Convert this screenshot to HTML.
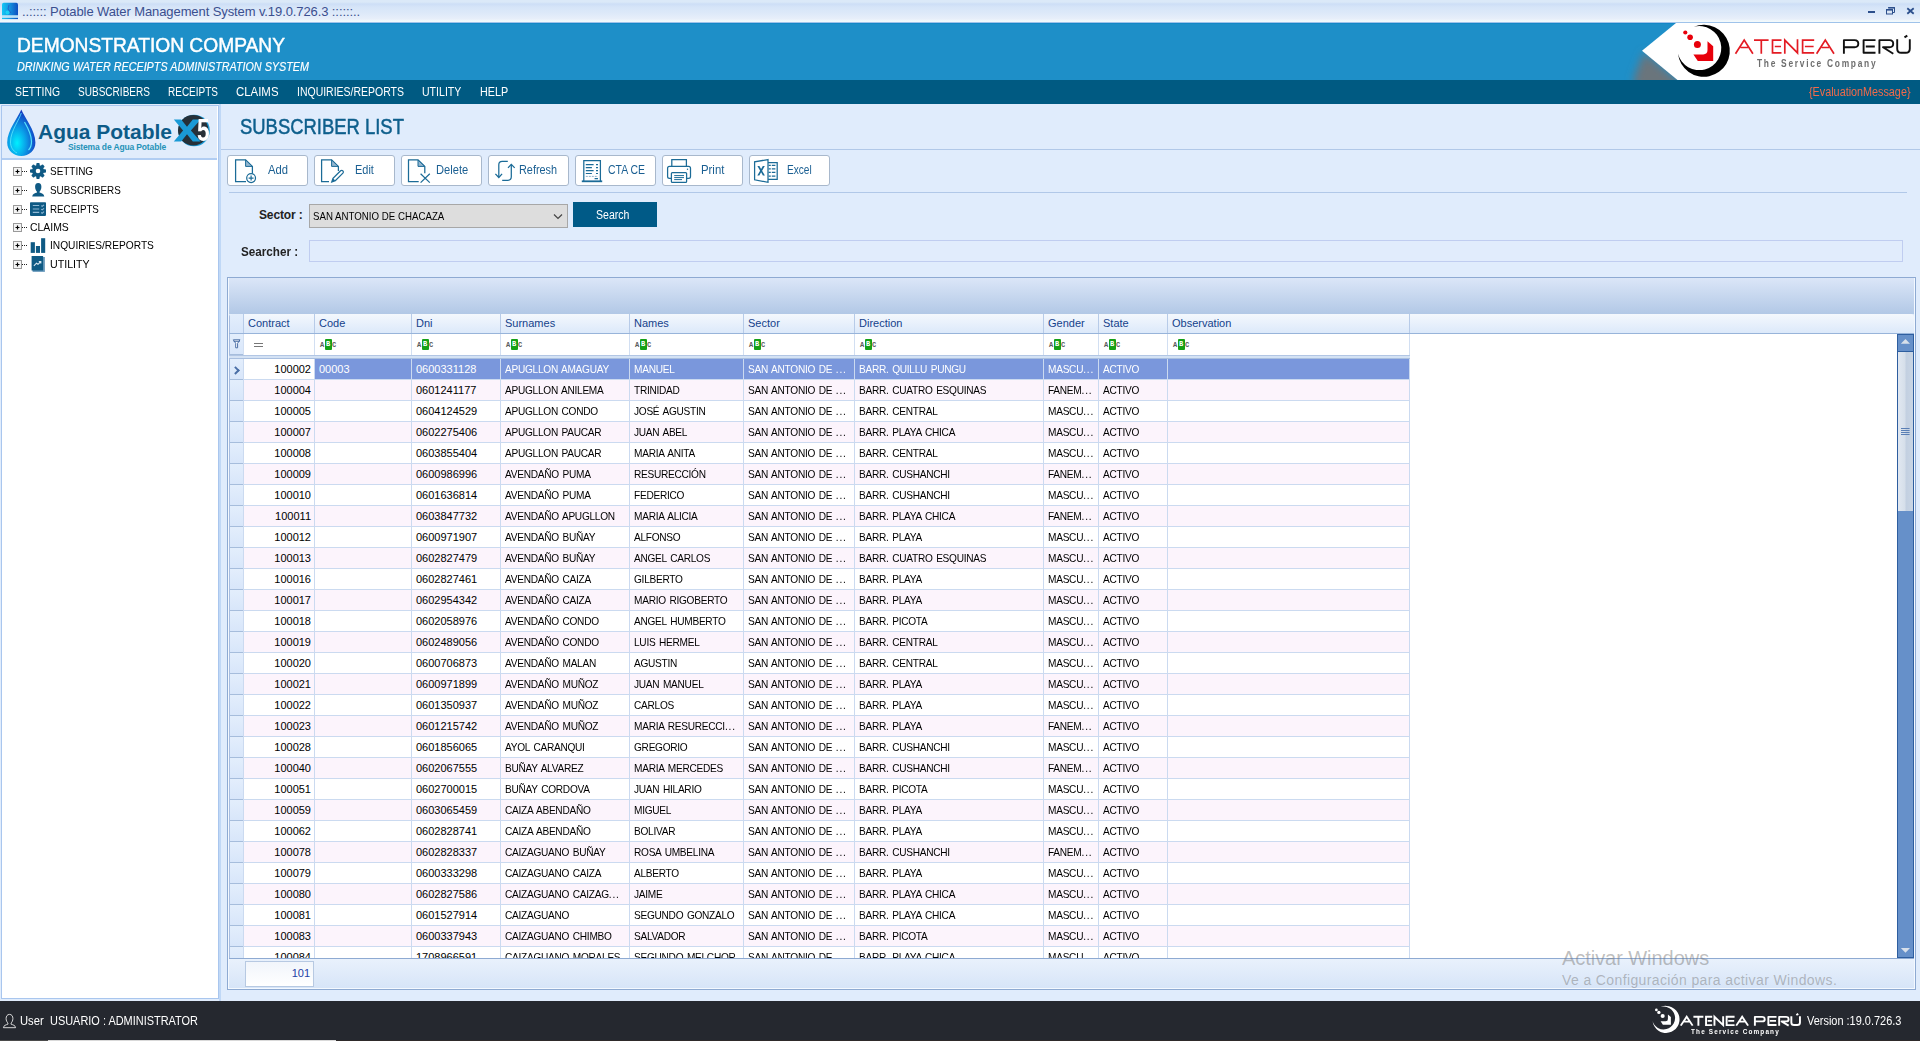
<!DOCTYPE html>
<html><head><meta charset="utf-8">
<style>
*{box-sizing:border-box;margin:0;padding:0}
html,body{width:1920px;height:1041px;overflow:hidden;background:#e0ecfc;font-family:"Liberation Sans",sans-serif}
.a{position:absolute}
#titlebar{left:0;top:0;width:1920px;height:23px;background:linear-gradient(#dbe9f8 0px,#dbe9f8 2px,#cddef6 4px,#d6e5f8 7px,#dde9f9 13px,#e8effa 19px,#f2f9fc 21px,#f2f9fc 22px);border-bottom:1px solid #9fc3ea}
#titletxt{left:22px;top:4px;font-size:13px;color:#3b4f8f;white-space:nowrap}
#header{left:0;top:23px;width:1920px;height:57px;background:#1e8fc8;border-top:1px solid #1487c6}
#company{left:17px;top:34px;font-size:19.5px;color:#fff;white-space:nowrap;-webkit-text-stroke:0.45px #fff}
#subtitle{left:17px;top:60px;font-size:12px;color:#fff;font-style:italic;white-space:nowrap;-webkit-text-stroke:0.15px #fff}
#menubar{left:0;top:80px;width:1920px;height:24px;background:#005a82}
.mi{top:85px;font-size:12px;color:#fff;white-space:nowrap}
#evalmsg{left:1809px;top:85px;font-size:12px;color:#f26a4a;white-space:nowrap}
.stt{top:1013px;font-size:13px;color:#fff;white-space:nowrap}
#status{left:0;top:1001px;width:1920px;height:40px;background:#25282f}
/* left panel */
#lp{left:1px;top:105px;width:218px;height:894px;border:1px solid #a9c6ee;background:#fff}
#logobox{left:2px;top:106px;width:215px;height:54px;background:#e1ecfb;border-bottom:2px solid #b1cdf2}
.ti{font-size:11px;color:#000;white-space:nowrap}
.exp{width:9px;height:9px;border:1px solid #8f8f8f;background:linear-gradient(#fff,#e4e4e4)}
.exp:before{content:"";position:absolute;left:1px;top:3px;width:5px;height:1px;background:#000}
.exp:after{content:"";position:absolute;left:3px;top:1px;width:1px;height:5px;background:#000}
.dots{width:5px;height:1px;border-top:1px dotted #808080}
/* right content */
#splitter{left:219px;top:104px;width:2px;height:897px;background:#c0d8f6}
#pagetitle{left:240px;top:114px;font-size:22px;color:#0e5f8c;white-space:nowrap;-webkit-text-stroke:0.5px #0e5f8c}
.hline{height:1px;background:#b1c8e8}
.btn{top:155px;width:81px;height:31px;border:1px solid #a8b8cc;border-radius:3px;background:#fff}
.btn span{position:absolute;top:7px;font-size:12px;color:#1a5f92;white-space:nowrap}
.btn svg{position:absolute;left:6px;top:2px}
#sectorlbl{left:259px;top:208px;font-size:12px;font-weight:bold;color:#222;white-space:nowrap}
#combo{left:309px;top:204px;width:259px;height:24px;background:#dddddd;border:1px solid #a7a7a7}
#combo span{position:absolute;left:3px;top:5px;font-size:11px;color:#000;white-space:nowrap}
#searchbtn{left:573px;top:202px;width:84px;height:25px;background:#005a87}
#searchbtn span{position:absolute;left:23px;top:6px;font-size:12px;color:#fff}
#searcherlbl{left:241px;top:245px;font-size:12px;font-weight:bold;color:#222;white-space:nowrap}
#searcher{left:309px;top:240px;width:1594px;height:22px;border:1px solid #c0cdf0;background:#e1ecfc}
/* grid */
#gridouter{left:227px;top:277px;width:1689px;height:713px;border:1px solid #8eaad2;background:#dbe7f8}
#grid{left:229px;top:278px;width:1685px;height:710px;overflow:hidden}
#grouppanel{left:0;top:0;width:1685px;height:36px;background:linear-gradient(#dbe6f8,#b2c8e6)}
#hdr{left:0;top:36px;width:1685px;height:20px;background:linear-gradient(#f4f8fd,#dce9fa);border-bottom:1px solid #98b4da;border-top-right-radius:3px;border-top-left-radius:3px;overflow:hidden}
.hc{position:absolute;top:0;height:19px;border-left:1px solid #b7cbe8;padding-left:4px;font-size:11px;line-height:18px;color:#15428b;white-space:nowrap}
#flt{left:0;top:56px;width:1669px;height:22px;background:#fff}
.fc{position:absolute;top:0;height:21px;border-left:1px solid #d2dff2;}
#fltline{left:0;top:77px;width:1181px;height:4px;background:#d4e2f4;border-top:1px solid #b2c6e4;border-bottom:1px solid #a9bfdf}
.row{position:absolute;left:0;width:1181px;height:21px;background:#fff;border-right:1px solid #cbdaf0}
.row.alt{background:#fcf4fc}
.c{position:absolute;top:0;height:21px;border-left:1px solid #cbdaf0;border-bottom:1px solid #cbdaf0;padding-left:4px;font-size:11px;line-height:20px;color:#000;white-space:nowrap;overflow:hidden}
.c.r{text-align:right;padding-right:3px;padding-left:0}
.c.t .sx{display:inline-block;transform:scaleX(0.92);transform-origin:0 0;letter-spacing:-0.3px;word-spacing:1.2px}
.el{letter-spacing:0.9px}
.arr{position:absolute;left:4px;top:7px;width:6px;height:6px;border-right:2px solid #4a6ea6;border-bottom:2px solid #4a6ea6;transform:rotate(-45deg) translate(-2px,0px)}
.funnel{position:absolute;left:4px;top:5px}
.row.sel .c{background:#7a97dc;color:#fff}
.row.sel .c.r{background:#fff;color:#000}
.ind{position:absolute;left:0;width:15px;height:21px;background:linear-gradient(#e3eefc,#d8e6fa);border-bottom:1px solid #a6bddc;border-right:1px solid #a8bfe0;border-left:1px solid #a8bde0}
.abc{position:absolute;left:5px;top:5px;width:16px;height:11px}
.abc i,.abc b{position:absolute;font-style:normal;font-weight:bold;font-size:7px;line-height:7px;font-family:"Liberation Mono",monospace}
.abc i{top:2.5px;color:#5a5a5a}
.abc i:first-child{left:0}
.abc i:last-child{left:12px}
.abc b{left:4.5px;top:0;width:7px;height:10.5px;background:#16a016;color:#fff;text-align:center;line-height:10.5px;border-radius:1px}
.eq{position:absolute;left:10px;top:9px;width:9px;height:4px;border-top:1px solid #777;border-bottom:1px solid #777}
#footer{left:0;top:680px;width:1685px;height:30px;background:linear-gradient(#e9f1fc,#d7e5f8);border-top:1px solid #8eaad2}
#footcell{left:16px;top:2px;width:69px;height:26px;border:1px solid #b7c9e2;background:linear-gradient(#f1f5fb,#fff);font-size:11px;color:#2442a6;text-align:right;padding-right:3px;line-height:22px}
#vscroll{left:1668px;top:56px;width:17px;height:624px;background:#6690c9;border:1px solid #2e5e9f}
#sbup{left:0;top:0;width:15px;height:17px;background:#6690c9;border-bottom:1px solid #2e5e9f}
#sbthumb{left:0;top:17px;width:15px;height:159px;background:linear-gradient(90deg,#e1e8f1,#d6dfea 45%,#c3d0e1 55%,#c9d5e4)}
#wm1{left:1562px;top:947px;font-size:20px;color:rgba(120,120,120,0.48);white-space:nowrap}
#wm2{left:1562px;top:972px;font-size:14px;color:rgba(120,120,120,0.48);white-space:nowrap}
#titletxt{letter-spacing:-0.098px}
#company{transform:scaleX(0.9842);transform-origin:0 0}
#subtitle{transform:scaleX(0.8987);transform-origin:0 0}
#mi0{transform:scaleX(0.8651);transform-origin:0 0}
#mi1{transform:scaleX(0.8369);transform-origin:0 0}
#mi2{transform:scaleX(0.8331);transform-origin:0 0}
#mi3{transform:scaleX(0.9510);transform-origin:0 0}
#mi4{transform:scaleX(0.8737);transform-origin:0 0}
#mi5{transform:scaleX(0.8797);transform-origin:0 0}
#mi6{transform:scaleX(0.8961);transform-origin:0 0}
#evalmsg{transform:scaleX(0.9002);transform-origin:0 0}
#pagetitle{transform:scaleX(0.8379);transform-origin:0 0}
#bt0{transform:scaleX(0.9364);transform-origin:0 0}
#bt1{transform:scaleX(0.9136);transform-origin:0 0}
#bt2{transform:scaleX(0.9283);transform-origin:0 0}
#bt3{transform:scaleX(0.9065);transform-origin:0 0}
#bt4{transform:scaleX(0.8715);transform-origin:0 0}
#bt5{transform:scaleX(0.9478);transform-origin:0 0}
#bt6{transform:scaleX(0.8417);transform-origin:0 0}
#sectorlbl{letter-spacing:-0.148px}
#combotxt{transform:scaleX(0.8816);transform-origin:0 0}
#searchtxt{transform:scaleX(0.8782);transform-origin:0 0}
#searcherlbl{transform:scaleX(0.9727);transform-origin:0 0}
#tr0{transform:scaleX(0.9041);transform-origin:0 0}
#tr1{transform:scaleX(0.8978);transform-origin:0 0}
#tr2{transform:scaleX(0.8888);transform-origin:0 0}
#tr3{transform:scaleX(0.9471);transform-origin:0 0}
#tr4{transform:scaleX(0.9255);transform-origin:0 0}
#tr5{transform:scaleX(0.9694);transform-origin:0 0}
#st1{transform:scaleX(0.8633);transform-origin:0 0}
#st2{transform:scaleX(0.8420);transform-origin:0 0}
#st3{transform:scaleX(0.9128);transform-origin:0 0}
#wm1{letter-spacing:-0.048px}
#agua{letter-spacing:-0.016px}
#sistema{letter-spacing:-0.141px}
#wm2{letter-spacing:0.382px}
</style></head><body>

<div id="titlebar" class="a"></div>
<div id="titletxt" class="a">..::::: Potable Water Management System v.19.0.726.3 ::::::..</div>


<div id="header" class="a"></div>
<div id="company" class="a">DEMONSTRATION COMPANY</div>
<div id="subtitle" class="a">DRINKING WATER RECEIPTS ADMINISTRATION SYSTEM</div>

<div id="menubar" class="a"></div>
<div id="mi0" class="a mi" style="left:15px">SETTING</div>
<div id="mi1" class="a mi" style="left:78px">SUBSCRIBERS</div>
<div id="mi2" class="a mi" style="left:168px">RECEIPTS</div>
<div id="mi3" class="a mi" style="left:236px">CLAIMS</div>
<div id="mi4" class="a mi" style="left:297px">INQUIRIES/REPORTS</div>
<div id="mi5" class="a mi" style="left:422px">UTILITY</div>
<div id="mi6" class="a mi" style="left:480px">HELP</div>
<div id="evalmsg" class="a">{EvaluationMessage}</div>

<!-- left panel -->
<div id="lp" class="a"></div>
<div id="logobox" class="a"></div>
<div id="tr0" class="a ti" style="left:50px;top:165px">SETTING</div>
<div id="tr1" class="a ti" style="left:50px;top:184px">SUBSCRIBERS</div>
<div id="tr2" class="a ti" style="left:50px;top:203px">RECEIPTS</div>
<div id="tr3" class="a ti" style="left:30px;top:221px">CLAIMS</div>
<div id="tr4" class="a ti" style="left:50px;top:239px">INQUIRIES/REPORTS</div>
<div id="tr5" class="a ti" style="left:50px;top:258px">UTILITY</div>

<!-- right content -->
<div id="splitter" class="a"></div>
<div id="pagetitle" class="a">SUBSCRIBER LIST</div>
<div class="a hline" style="left:221px;top:149px;width:1699px"></div>
<div class="a hline" style="left:229px;top:192px;width:1678px"></div>

<div class="a btn" style="left:227px"><span id="bt0" style="left:40px">Add</span></div>
<div class="a btn" style="left:314px"><span id="bt1" style="left:40px">Edit</span></div>
<div class="a btn" style="left:401px"><span id="bt2" style="left:34px">Delete</span></div>
<div class="a btn" style="left:488px"><span id="bt3" style="left:30px">Refresh</span></div>
<div class="a btn" style="left:575px"><span id="bt4" style="left:32px">CTA CE</span></div>
<div class="a btn" style="left:662px"><span id="bt5" style="left:38px">Print</span></div>
<div class="a btn" style="left:749px"><span id="bt6" style="left:37px">Excel</span></div>

<div id="sectorlbl" class="a">Sector :</div>
<div id="combo" class="a"><span id="combotxt">SAN ANTONIO DE CHACAZA</span><svg class="a" style="left:243px;top:8px" width="10" height="7"><path d="M1,1.5 L5,5.5 L9,1.5" stroke="#444" stroke-width="1.2" fill="none"/></svg></div>
<div id="searchbtn" class="a"><span id="searchtxt">Search</span></div>
<div id="searcherlbl" class="a">Searcher :</div>
<div id="searcher" class="a"></div>

<div id="gridouter" class="a"></div>
<div class="a" style="left:228px;top:278px;width:1687px;height:711px;border:1px solid #f4f9ff"></div>
<div id="grid" class="a">
 <div id="grouppanel" class="a"></div>
 <div id="hdr" class="a"><div class="ind" style="top:0;height:19px;border-bottom:none"></div><div class="hc" style="left:14px;width:71px">Contract</div><div class="hc" style="left:85px;width:97px">Code</div><div class="hc" style="left:182px;width:89px">Dni</div><div class="hc" style="left:271px;width:129px">Surnames</div><div class="hc" style="left:400px;width:114px">Names</div><div class="hc" style="left:514px;width:111px">Sector</div><div class="hc" style="left:625px;width:189px">Direction</div><div class="hc" style="left:814px;width:55px">Gender</div><div class="hc" style="left:869px;width:69px">State</div><div class="hc" style="left:938px;width:242px">Observation</div><div class="hc" style="left:1180px;width:504px"></div></div>
 <div class="a" style="left:0;top:77px;width:1669px;height:603px;background:#fff"></div>
 <div id="flt" class="a"><div class="ind" style="top:0"></div><div class="fc" style="left:14px;width:71px"><span class="eq"></span></div><div class="fc" style="left:85px;width:97px"><span class="abc"><i>A</i><b>B</b><i>C</i></span></div><div class="fc" style="left:182px;width:89px"><span class="abc"><i>A</i><b>B</b><i>C</i></span></div><div class="fc" style="left:271px;width:129px"><span class="abc"><i>A</i><b>B</b><i>C</i></span></div><div class="fc" style="left:400px;width:114px"><span class="abc"><i>A</i><b>B</b><i>C</i></span></div><div class="fc" style="left:514px;width:111px"><span class="abc"><i>A</i><b>B</b><i>C</i></span></div><div class="fc" style="left:625px;width:189px"><span class="abc"><i>A</i><b>B</b><i>C</i></span></div><div class="fc" style="left:814px;width:55px"><span class="abc"><i>A</i><b>B</b><i>C</i></span></div><div class="fc" style="left:869px;width:69px"><span class="abc"><i>A</i><b>B</b><i>C</i></span></div><div class="fc" style="left:938px;width:242px"><span class="abc"><i>A</i><b>B</b><i>C</i></span></div><div class="fc" style="left:1180px;width:1px"></div></div>
 <div id="fltline" class="a"></div>
<div class="row sel" style="top:81px"><div class="ind"><span class="arr"></span></div><div class="c r" style="left:14px;width:71px">100002</div><div class="c" style="left:85px;width:97px">00003</div><div class="c" style="left:182px;width:89px">0600331128</div><div class="c t" style="left:271px;width:129px"><span class="sx">APUGLLON AMAGUAY</span></div><div class="c t" style="left:400px;width:114px"><span class="sx">MANUEL</span></div><div class="c t" style="left:514px;width:111px"><span class="sx">SAN ANTONIO DE <span class="el">...</span></span></div><div class="c t" style="left:625px;width:189px"><span class="sx">BARR. QUILLU PUNGU</span></div><div class="c t" style="left:814px;width:55px"><span class="sx">MASCU<span class="el">...</span></span></div><div class="c t" style="left:869px;width:69px"><span class="sx">ACTIVO</span></div><div class="c t" style="left:938px;width:242px"></div></div>
<div class="row alt" style="top:102px"><div class="ind"></div><div class="c r" style="left:14px;width:71px">100004</div><div class="c" style="left:85px;width:97px"></div><div class="c" style="left:182px;width:89px">0601241177</div><div class="c t" style="left:271px;width:129px"><span class="sx">APUGLLON ANILEMA</span></div><div class="c t" style="left:400px;width:114px"><span class="sx">TRINIDAD</span></div><div class="c t" style="left:514px;width:111px"><span class="sx">SAN ANTONIO DE <span class="el">...</span></span></div><div class="c t" style="left:625px;width:189px"><span class="sx">BARR. CUATRO ESQUINAS</span></div><div class="c t" style="left:814px;width:55px"><span class="sx">FANEM<span class="el">...</span></span></div><div class="c t" style="left:869px;width:69px"><span class="sx">ACTIVO</span></div><div class="c t" style="left:938px;width:242px"></div></div>
<div class="row" style="top:123px"><div class="ind"></div><div class="c r" style="left:14px;width:71px">100005</div><div class="c" style="left:85px;width:97px"></div><div class="c" style="left:182px;width:89px">0604124529</div><div class="c t" style="left:271px;width:129px"><span class="sx">APUGLLON CONDO</span></div><div class="c t" style="left:400px;width:114px"><span class="sx">JOSÉ AGUSTIN</span></div><div class="c t" style="left:514px;width:111px"><span class="sx">SAN ANTONIO DE <span class="el">...</span></span></div><div class="c t" style="left:625px;width:189px"><span class="sx">BARR. CENTRAL</span></div><div class="c t" style="left:814px;width:55px"><span class="sx">MASCU<span class="el">...</span></span></div><div class="c t" style="left:869px;width:69px"><span class="sx">ACTIVO</span></div><div class="c t" style="left:938px;width:242px"></div></div>
<div class="row alt" style="top:144px"><div class="ind"></div><div class="c r" style="left:14px;width:71px">100007</div><div class="c" style="left:85px;width:97px"></div><div class="c" style="left:182px;width:89px">0602275406</div><div class="c t" style="left:271px;width:129px"><span class="sx">APUGLLON PAUCAR</span></div><div class="c t" style="left:400px;width:114px"><span class="sx">JUAN ABEL</span></div><div class="c t" style="left:514px;width:111px"><span class="sx">SAN ANTONIO DE <span class="el">...</span></span></div><div class="c t" style="left:625px;width:189px"><span class="sx">BARR. PLAYA CHICA</span></div><div class="c t" style="left:814px;width:55px"><span class="sx">MASCU<span class="el">...</span></span></div><div class="c t" style="left:869px;width:69px"><span class="sx">ACTIVO</span></div><div class="c t" style="left:938px;width:242px"></div></div>
<div class="row" style="top:165px"><div class="ind"></div><div class="c r" style="left:14px;width:71px">100008</div><div class="c" style="left:85px;width:97px"></div><div class="c" style="left:182px;width:89px">0603855404</div><div class="c t" style="left:271px;width:129px"><span class="sx">APUGLLON PAUCAR</span></div><div class="c t" style="left:400px;width:114px"><span class="sx">MARIA ANITA</span></div><div class="c t" style="left:514px;width:111px"><span class="sx">SAN ANTONIO DE <span class="el">...</span></span></div><div class="c t" style="left:625px;width:189px"><span class="sx">BARR. CENTRAL</span></div><div class="c t" style="left:814px;width:55px"><span class="sx">MASCU<span class="el">...</span></span></div><div class="c t" style="left:869px;width:69px"><span class="sx">ACTIVO</span></div><div class="c t" style="left:938px;width:242px"></div></div>
<div class="row alt" style="top:186px"><div class="ind"></div><div class="c r" style="left:14px;width:71px">100009</div><div class="c" style="left:85px;width:97px"></div><div class="c" style="left:182px;width:89px">0600986996</div><div class="c t" style="left:271px;width:129px"><span class="sx">AVENDAÑO PUMA</span></div><div class="c t" style="left:400px;width:114px"><span class="sx">RESURECCIÓN</span></div><div class="c t" style="left:514px;width:111px"><span class="sx">SAN ANTONIO DE <span class="el">...</span></span></div><div class="c t" style="left:625px;width:189px"><span class="sx">BARR. CUSHANCHI</span></div><div class="c t" style="left:814px;width:55px"><span class="sx">FANEM<span class="el">...</span></span></div><div class="c t" style="left:869px;width:69px"><span class="sx">ACTIVO</span></div><div class="c t" style="left:938px;width:242px"></div></div>
<div class="row" style="top:207px"><div class="ind"></div><div class="c r" style="left:14px;width:71px">100010</div><div class="c" style="left:85px;width:97px"></div><div class="c" style="left:182px;width:89px">0601636814</div><div class="c t" style="left:271px;width:129px"><span class="sx">AVENDAÑO PUMA</span></div><div class="c t" style="left:400px;width:114px"><span class="sx">FEDERICO</span></div><div class="c t" style="left:514px;width:111px"><span class="sx">SAN ANTONIO DE <span class="el">...</span></span></div><div class="c t" style="left:625px;width:189px"><span class="sx">BARR. CUSHANCHI</span></div><div class="c t" style="left:814px;width:55px"><span class="sx">MASCU<span class="el">...</span></span></div><div class="c t" style="left:869px;width:69px"><span class="sx">ACTIVO</span></div><div class="c t" style="left:938px;width:242px"></div></div>
<div class="row alt" style="top:228px"><div class="ind"></div><div class="c r" style="left:14px;width:71px">100011</div><div class="c" style="left:85px;width:97px"></div><div class="c" style="left:182px;width:89px">0603847732</div><div class="c t" style="left:271px;width:129px"><span class="sx">AVENDAÑO APUGLLON</span></div><div class="c t" style="left:400px;width:114px"><span class="sx">MARIA ALICIA</span></div><div class="c t" style="left:514px;width:111px"><span class="sx">SAN ANTONIO DE <span class="el">...</span></span></div><div class="c t" style="left:625px;width:189px"><span class="sx">BARR. PLAYA CHICA</span></div><div class="c t" style="left:814px;width:55px"><span class="sx">FANEM<span class="el">...</span></span></div><div class="c t" style="left:869px;width:69px"><span class="sx">ACTIVO</span></div><div class="c t" style="left:938px;width:242px"></div></div>
<div class="row" style="top:249px"><div class="ind"></div><div class="c r" style="left:14px;width:71px">100012</div><div class="c" style="left:85px;width:97px"></div><div class="c" style="left:182px;width:89px">0600971907</div><div class="c t" style="left:271px;width:129px"><span class="sx">AVENDAÑO BUÑAY</span></div><div class="c t" style="left:400px;width:114px"><span class="sx">ALFONSO</span></div><div class="c t" style="left:514px;width:111px"><span class="sx">SAN ANTONIO DE <span class="el">...</span></span></div><div class="c t" style="left:625px;width:189px"><span class="sx">BARR. PLAYA</span></div><div class="c t" style="left:814px;width:55px"><span class="sx">MASCU<span class="el">...</span></span></div><div class="c t" style="left:869px;width:69px"><span class="sx">ACTIVO</span></div><div class="c t" style="left:938px;width:242px"></div></div>
<div class="row alt" style="top:270px"><div class="ind"></div><div class="c r" style="left:14px;width:71px">100013</div><div class="c" style="left:85px;width:97px"></div><div class="c" style="left:182px;width:89px">0602827479</div><div class="c t" style="left:271px;width:129px"><span class="sx">AVENDAÑO BUÑAY</span></div><div class="c t" style="left:400px;width:114px"><span class="sx">ANGEL CARLOS</span></div><div class="c t" style="left:514px;width:111px"><span class="sx">SAN ANTONIO DE <span class="el">...</span></span></div><div class="c t" style="left:625px;width:189px"><span class="sx">BARR. CUATRO ESQUINAS</span></div><div class="c t" style="left:814px;width:55px"><span class="sx">MASCU<span class="el">...</span></span></div><div class="c t" style="left:869px;width:69px"><span class="sx">ACTIVO</span></div><div class="c t" style="left:938px;width:242px"></div></div>
<div class="row" style="top:291px"><div class="ind"></div><div class="c r" style="left:14px;width:71px">100016</div><div class="c" style="left:85px;width:97px"></div><div class="c" style="left:182px;width:89px">0602827461</div><div class="c t" style="left:271px;width:129px"><span class="sx">AVENDAÑO CAIZA</span></div><div class="c t" style="left:400px;width:114px"><span class="sx">GILBERTO</span></div><div class="c t" style="left:514px;width:111px"><span class="sx">SAN ANTONIO DE <span class="el">...</span></span></div><div class="c t" style="left:625px;width:189px"><span class="sx">BARR. PLAYA</span></div><div class="c t" style="left:814px;width:55px"><span class="sx">MASCU<span class="el">...</span></span></div><div class="c t" style="left:869px;width:69px"><span class="sx">ACTIVO</span></div><div class="c t" style="left:938px;width:242px"></div></div>
<div class="row alt" style="top:312px"><div class="ind"></div><div class="c r" style="left:14px;width:71px">100017</div><div class="c" style="left:85px;width:97px"></div><div class="c" style="left:182px;width:89px">0602954342</div><div class="c t" style="left:271px;width:129px"><span class="sx">AVENDAÑO CAIZA</span></div><div class="c t" style="left:400px;width:114px"><span class="sx">MARIO RIGOBERTO</span></div><div class="c t" style="left:514px;width:111px"><span class="sx">SAN ANTONIO DE <span class="el">...</span></span></div><div class="c t" style="left:625px;width:189px"><span class="sx">BARR. PLAYA</span></div><div class="c t" style="left:814px;width:55px"><span class="sx">MASCU<span class="el">...</span></span></div><div class="c t" style="left:869px;width:69px"><span class="sx">ACTIVO</span></div><div class="c t" style="left:938px;width:242px"></div></div>
<div class="row" style="top:333px"><div class="ind"></div><div class="c r" style="left:14px;width:71px">100018</div><div class="c" style="left:85px;width:97px"></div><div class="c" style="left:182px;width:89px">0602058976</div><div class="c t" style="left:271px;width:129px"><span class="sx">AVENDAÑO CONDO</span></div><div class="c t" style="left:400px;width:114px"><span class="sx">ANGEL HUMBERTO</span></div><div class="c t" style="left:514px;width:111px"><span class="sx">SAN ANTONIO DE <span class="el">...</span></span></div><div class="c t" style="left:625px;width:189px"><span class="sx">BARR. PICOTA</span></div><div class="c t" style="left:814px;width:55px"><span class="sx">MASCU<span class="el">...</span></span></div><div class="c t" style="left:869px;width:69px"><span class="sx">ACTIVO</span></div><div class="c t" style="left:938px;width:242px"></div></div>
<div class="row alt" style="top:354px"><div class="ind"></div><div class="c r" style="left:14px;width:71px">100019</div><div class="c" style="left:85px;width:97px"></div><div class="c" style="left:182px;width:89px">0602489056</div><div class="c t" style="left:271px;width:129px"><span class="sx">AVENDAÑO CONDO</span></div><div class="c t" style="left:400px;width:114px"><span class="sx">LUIS HERMEL</span></div><div class="c t" style="left:514px;width:111px"><span class="sx">SAN ANTONIO DE <span class="el">...</span></span></div><div class="c t" style="left:625px;width:189px"><span class="sx">BARR. CENTRAL</span></div><div class="c t" style="left:814px;width:55px"><span class="sx">MASCU<span class="el">...</span></span></div><div class="c t" style="left:869px;width:69px"><span class="sx">ACTIVO</span></div><div class="c t" style="left:938px;width:242px"></div></div>
<div class="row" style="top:375px"><div class="ind"></div><div class="c r" style="left:14px;width:71px">100020</div><div class="c" style="left:85px;width:97px"></div><div class="c" style="left:182px;width:89px">0600706873</div><div class="c t" style="left:271px;width:129px"><span class="sx">AVENDAÑO MALAN</span></div><div class="c t" style="left:400px;width:114px"><span class="sx">AGUSTIN</span></div><div class="c t" style="left:514px;width:111px"><span class="sx">SAN ANTONIO DE <span class="el">...</span></span></div><div class="c t" style="left:625px;width:189px"><span class="sx">BARR. CENTRAL</span></div><div class="c t" style="left:814px;width:55px"><span class="sx">MASCU<span class="el">...</span></span></div><div class="c t" style="left:869px;width:69px"><span class="sx">ACTIVO</span></div><div class="c t" style="left:938px;width:242px"></div></div>
<div class="row alt" style="top:396px"><div class="ind"></div><div class="c r" style="left:14px;width:71px">100021</div><div class="c" style="left:85px;width:97px"></div><div class="c" style="left:182px;width:89px">0600971899</div><div class="c t" style="left:271px;width:129px"><span class="sx">AVENDAÑO MUÑOZ</span></div><div class="c t" style="left:400px;width:114px"><span class="sx">JUAN MANUEL</span></div><div class="c t" style="left:514px;width:111px"><span class="sx">SAN ANTONIO DE <span class="el">...</span></span></div><div class="c t" style="left:625px;width:189px"><span class="sx">BARR. PLAYA</span></div><div class="c t" style="left:814px;width:55px"><span class="sx">MASCU<span class="el">...</span></span></div><div class="c t" style="left:869px;width:69px"><span class="sx">ACTIVO</span></div><div class="c t" style="left:938px;width:242px"></div></div>
<div class="row" style="top:417px"><div class="ind"></div><div class="c r" style="left:14px;width:71px">100022</div><div class="c" style="left:85px;width:97px"></div><div class="c" style="left:182px;width:89px">0601350937</div><div class="c t" style="left:271px;width:129px"><span class="sx">AVENDAÑO MUÑOZ</span></div><div class="c t" style="left:400px;width:114px"><span class="sx">CARLOS</span></div><div class="c t" style="left:514px;width:111px"><span class="sx">SAN ANTONIO DE <span class="el">...</span></span></div><div class="c t" style="left:625px;width:189px"><span class="sx">BARR. PLAYA</span></div><div class="c t" style="left:814px;width:55px"><span class="sx">MASCU<span class="el">...</span></span></div><div class="c t" style="left:869px;width:69px"><span class="sx">ACTIVO</span></div><div class="c t" style="left:938px;width:242px"></div></div>
<div class="row alt" style="top:438px"><div class="ind"></div><div class="c r" style="left:14px;width:71px">100023</div><div class="c" style="left:85px;width:97px"></div><div class="c" style="left:182px;width:89px">0601215742</div><div class="c t" style="left:271px;width:129px"><span class="sx">AVENDAÑO MUÑOZ</span></div><div class="c t" style="left:400px;width:114px"><span class="sx">MARIA RESURECCI<span class="el">...</span></span></div><div class="c t" style="left:514px;width:111px"><span class="sx">SAN ANTONIO DE <span class="el">...</span></span></div><div class="c t" style="left:625px;width:189px"><span class="sx">BARR. PLAYA</span></div><div class="c t" style="left:814px;width:55px"><span class="sx">FANEM<span class="el">...</span></span></div><div class="c t" style="left:869px;width:69px"><span class="sx">ACTIVO</span></div><div class="c t" style="left:938px;width:242px"></div></div>
<div class="row" style="top:459px"><div class="ind"></div><div class="c r" style="left:14px;width:71px">100028</div><div class="c" style="left:85px;width:97px"></div><div class="c" style="left:182px;width:89px">0601856065</div><div class="c t" style="left:271px;width:129px"><span class="sx">AYOL CARANQUI</span></div><div class="c t" style="left:400px;width:114px"><span class="sx">GREGORIO</span></div><div class="c t" style="left:514px;width:111px"><span class="sx">SAN ANTONIO DE <span class="el">...</span></span></div><div class="c t" style="left:625px;width:189px"><span class="sx">BARR. CUSHANCHI</span></div><div class="c t" style="left:814px;width:55px"><span class="sx">MASCU<span class="el">...</span></span></div><div class="c t" style="left:869px;width:69px"><span class="sx">ACTIVO</span></div><div class="c t" style="left:938px;width:242px"></div></div>
<div class="row alt" style="top:480px"><div class="ind"></div><div class="c r" style="left:14px;width:71px">100040</div><div class="c" style="left:85px;width:97px"></div><div class="c" style="left:182px;width:89px">0602067555</div><div class="c t" style="left:271px;width:129px"><span class="sx">BUÑAY ALVAREZ</span></div><div class="c t" style="left:400px;width:114px"><span class="sx">MARIA MERCEDES</span></div><div class="c t" style="left:514px;width:111px"><span class="sx">SAN ANTONIO DE <span class="el">...</span></span></div><div class="c t" style="left:625px;width:189px"><span class="sx">BARR. CUSHANCHI</span></div><div class="c t" style="left:814px;width:55px"><span class="sx">FANEM<span class="el">...</span></span></div><div class="c t" style="left:869px;width:69px"><span class="sx">ACTIVO</span></div><div class="c t" style="left:938px;width:242px"></div></div>
<div class="row" style="top:501px"><div class="ind"></div><div class="c r" style="left:14px;width:71px">100051</div><div class="c" style="left:85px;width:97px"></div><div class="c" style="left:182px;width:89px">0602700015</div><div class="c t" style="left:271px;width:129px"><span class="sx">BUÑAY CORDOVA</span></div><div class="c t" style="left:400px;width:114px"><span class="sx">JUAN HILARIO</span></div><div class="c t" style="left:514px;width:111px"><span class="sx">SAN ANTONIO DE <span class="el">...</span></span></div><div class="c t" style="left:625px;width:189px"><span class="sx">BARR. PICOTA</span></div><div class="c t" style="left:814px;width:55px"><span class="sx">MASCU<span class="el">...</span></span></div><div class="c t" style="left:869px;width:69px"><span class="sx">ACTIVO</span></div><div class="c t" style="left:938px;width:242px"></div></div>
<div class="row alt" style="top:522px"><div class="ind"></div><div class="c r" style="left:14px;width:71px">100059</div><div class="c" style="left:85px;width:97px"></div><div class="c" style="left:182px;width:89px">0603065459</div><div class="c t" style="left:271px;width:129px"><span class="sx">CAIZA ABENDAÑO</span></div><div class="c t" style="left:400px;width:114px"><span class="sx">MIGUEL</span></div><div class="c t" style="left:514px;width:111px"><span class="sx">SAN ANTONIO DE <span class="el">...</span></span></div><div class="c t" style="left:625px;width:189px"><span class="sx">BARR. PLAYA</span></div><div class="c t" style="left:814px;width:55px"><span class="sx">MASCU<span class="el">...</span></span></div><div class="c t" style="left:869px;width:69px"><span class="sx">ACTIVO</span></div><div class="c t" style="left:938px;width:242px"></div></div>
<div class="row" style="top:543px"><div class="ind"></div><div class="c r" style="left:14px;width:71px">100062</div><div class="c" style="left:85px;width:97px"></div><div class="c" style="left:182px;width:89px">0602828741</div><div class="c t" style="left:271px;width:129px"><span class="sx">CAIZA ABENDAÑO</span></div><div class="c t" style="left:400px;width:114px"><span class="sx">BOLIVAR</span></div><div class="c t" style="left:514px;width:111px"><span class="sx">SAN ANTONIO DE <span class="el">...</span></span></div><div class="c t" style="left:625px;width:189px"><span class="sx">BARR. PLAYA</span></div><div class="c t" style="left:814px;width:55px"><span class="sx">MASCU<span class="el">...</span></span></div><div class="c t" style="left:869px;width:69px"><span class="sx">ACTIVO</span></div><div class="c t" style="left:938px;width:242px"></div></div>
<div class="row alt" style="top:564px"><div class="ind"></div><div class="c r" style="left:14px;width:71px">100078</div><div class="c" style="left:85px;width:97px"></div><div class="c" style="left:182px;width:89px">0602828337</div><div class="c t" style="left:271px;width:129px"><span class="sx">CAIZAGUANO BUÑAY</span></div><div class="c t" style="left:400px;width:114px"><span class="sx">ROSA UMBELINA</span></div><div class="c t" style="left:514px;width:111px"><span class="sx">SAN ANTONIO DE <span class="el">...</span></span></div><div class="c t" style="left:625px;width:189px"><span class="sx">BARR. CUSHANCHI</span></div><div class="c t" style="left:814px;width:55px"><span class="sx">FANEM<span class="el">...</span></span></div><div class="c t" style="left:869px;width:69px"><span class="sx">ACTIVO</span></div><div class="c t" style="left:938px;width:242px"></div></div>
<div class="row" style="top:585px"><div class="ind"></div><div class="c r" style="left:14px;width:71px">100079</div><div class="c" style="left:85px;width:97px"></div><div class="c" style="left:182px;width:89px">0600333298</div><div class="c t" style="left:271px;width:129px"><span class="sx">CAIZAGUANO CAIZA</span></div><div class="c t" style="left:400px;width:114px"><span class="sx">ALBERTO</span></div><div class="c t" style="left:514px;width:111px"><span class="sx">SAN ANTONIO DE <span class="el">...</span></span></div><div class="c t" style="left:625px;width:189px"><span class="sx">BARR. PLAYA</span></div><div class="c t" style="left:814px;width:55px"><span class="sx">MASCU<span class="el">...</span></span></div><div class="c t" style="left:869px;width:69px"><span class="sx">ACTIVO</span></div><div class="c t" style="left:938px;width:242px"></div></div>
<div class="row alt" style="top:606px"><div class="ind"></div><div class="c r" style="left:14px;width:71px">100080</div><div class="c" style="left:85px;width:97px"></div><div class="c" style="left:182px;width:89px">0602827586</div><div class="c t" style="left:271px;width:129px"><span class="sx">CAIZAGUANO CAIZAG<span class="el">...</span></span></div><div class="c t" style="left:400px;width:114px"><span class="sx">JAIME</span></div><div class="c t" style="left:514px;width:111px"><span class="sx">SAN ANTONIO DE <span class="el">...</span></span></div><div class="c t" style="left:625px;width:189px"><span class="sx">BARR. PLAYA CHICA</span></div><div class="c t" style="left:814px;width:55px"><span class="sx">MASCU<span class="el">...</span></span></div><div class="c t" style="left:869px;width:69px"><span class="sx">ACTIVO</span></div><div class="c t" style="left:938px;width:242px"></div></div>
<div class="row" style="top:627px"><div class="ind"></div><div class="c r" style="left:14px;width:71px">100081</div><div class="c" style="left:85px;width:97px"></div><div class="c" style="left:182px;width:89px">0601527914</div><div class="c t" style="left:271px;width:129px"><span class="sx">CAIZAGUANO</span></div><div class="c t" style="left:400px;width:114px"><span class="sx">SEGUNDO GONZALO</span></div><div class="c t" style="left:514px;width:111px"><span class="sx">SAN ANTONIO DE <span class="el">...</span></span></div><div class="c t" style="left:625px;width:189px"><span class="sx">BARR. PLAYA CHICA</span></div><div class="c t" style="left:814px;width:55px"><span class="sx">MASCU<span class="el">...</span></span></div><div class="c t" style="left:869px;width:69px"><span class="sx">ACTIVO</span></div><div class="c t" style="left:938px;width:242px"></div></div>
<div class="row alt" style="top:648px"><div class="ind"></div><div class="c r" style="left:14px;width:71px">100083</div><div class="c" style="left:85px;width:97px"></div><div class="c" style="left:182px;width:89px">0600337943</div><div class="c t" style="left:271px;width:129px"><span class="sx">CAIZAGUANO CHIMBO</span></div><div class="c t" style="left:400px;width:114px"><span class="sx">SALVADOR</span></div><div class="c t" style="left:514px;width:111px"><span class="sx">SAN ANTONIO DE <span class="el">...</span></span></div><div class="c t" style="left:625px;width:189px"><span class="sx">BARR. PICOTA</span></div><div class="c t" style="left:814px;width:55px"><span class="sx">MASCU<span class="el">...</span></span></div><div class="c t" style="left:869px;width:69px"><span class="sx">ACTIVO</span></div><div class="c t" style="left:938px;width:242px"></div></div>
<div class="row" style="top:669px"><div class="ind"></div><div class="c r" style="left:14px;width:71px">100084</div><div class="c" style="left:85px;width:97px"></div><div class="c" style="left:182px;width:89px">1708966591</div><div class="c t" style="left:271px;width:129px"><span class="sx">CAIZAGUANO MORALES</span></div><div class="c t" style="left:400px;width:114px"><span class="sx">SEGUNDO MELCHOR</span></div><div class="c t" style="left:514px;width:111px"><span class="sx">SAN ANTONIO DE <span class="el">...</span></span></div><div class="c t" style="left:625px;width:189px"><span class="sx">BARR. PLAYA CHICA</span></div><div class="c t" style="left:814px;width:55px"><span class="sx">MASCU<span class="el">...</span></span></div><div class="c t" style="left:869px;width:69px"><span class="sx">ACTIVO</span></div><div class="c t" style="left:938px;width:242px"></div></div>
 <div id="vscroll" class="a"><div id="sbup" class="a"><svg class="a" style="left:0;top:0" width="15" height="16"><path d="M2.8,8.8 L7.5,4 L12,8.8 Z" fill="#d8e0ea"/></svg></div><div id="sbthumb" class="a"><svg class="a" style="left:0;top:0" width="15" height="159"><path d="M3,76.5 H11.6 M3,78.5 H11.6 M3,80.5 H11.6 M3,82.5 H11.6" stroke="#5a7fb5" stroke-width="1"/></svg></div><svg class="a" style="left:0;top:610px" width="15" height="10"><path d="M2.8,3 L12,3 L7.5,7.8 Z" fill="#d8e0ea"/></svg></div>
 <div id="footer" class="a"><div id="footcell" class="a">101</div></div>
</div>

<div id="status" class="a"></div>
<svg class="a" style="left:0;top:0;pointer-events:none" width="1920" height="1041" viewBox="0 0 1920 1041">
<defs>
 <radialGradient id="dropg" cx="0.35" cy="0.72" r="0.7">
  <stop offset="0" stop-color="#00f0ff"/><stop offset="0.45" stop-color="#0aa0e8"/><stop offset="1" stop-color="#1438c0"/>
 </radialGradient>
 <linearGradient id="shadowg" gradientUnits="userSpaceOnUse" x1="1660" y1="65.4" x2="1647" y2="81">
  <stop offset="0" stop-color="#6b757b"/><stop offset="0.45" stop-color="#5c8195"/><stop offset="1" stop-color="#1e8fc8" stop-opacity="0"/>
 </linearGradient>
 <g id="crescent">
  <path d="M-10,-24 A26,26 0 1 1 -25.8,3 A22,22 0 1 0 -10,-24 Z"/>
 </g>
 <g id="atenea" fill="none" stroke-linejoin="miter">
  <path d="M0.5,14.5 L9.2,0.8 L17.9,14.5 M5.5,8.3 H13"/>
  <path d="M19,0.85 H33.6 M26.3,0.85 V14.5"/>
  <path d="M46.5,0.85 H37.5 V13.65 H46.5 M39.8,7.3 H46"/>
  <path d="M49.8,14.5 V0.85 L62.5,13.65 V0"/>
  <path d="M79.2,0.85 H67.6 V13.65 H79.2 M69.9,7.3 H78.6"/>
  <path d="M81.6,14.5 L90.3,0.8 L99,14.5 M86.6,8.3 H94"/>
 </g>
 <g id="peru" fill="none" stroke-linejoin="round">
  <path d="M108.9,14.5 V0.95 H119.5 Q123.3,0.95 123.3,4.5 Q123.3,8 119.5,8 H108.9"/>
  <path d="M140.5,0.95 H128.6 V13.55 H140.5 M130.8,7.3 H139.8"/>
  <path d="M144.4,14.5 V0.95 H154.5 Q158.2,0.95 158.2,4.5 Q158.2,8 154.5,8 H148 L158.3,14.5"/>
  <path d="M162.2,0 V9.5 Q162.2,13.55 166.2,13.55 H170.8 Q174.8,13.55 174.8,9.5 V0 M169.5,-1.8 L172.3,-3.6"/>
 </g>
</defs>

<!-- header logo panel -->
<g clip-path="url(#shclip)"><path d="M1644,52 L1680,82 L1680,95 L1636,95 L1634,78 Z" fill="#6b757b" filter="url(#shblur)"/></g>
<path d="M1676,23 H1920 V80 H1677.5 L1642,50.8 Z" fill="#fff"/>
<clipPath id="shclip"><rect x="1600" y="23" width="90" height="57"/></clipPath>
<filter id="shblur" x="-50%" y="-50%" width="200%" height="200%"><feGaussianBlur stdDeviation="4.5"/></filter>

<g transform="translate(1703.8,50.8)" fill="#000"><use href="#crescent"/></g>
<circle cx="1685.3" cy="32.5" r="2.1" fill="#e8000b"/>
<circle cx="1690.1" cy="37.3" r="2.8" fill="#e8000b"/>
<circle cx="1697.4" cy="44.4" r="3.5" fill="#e8000b"/>
<path d="M1707.5,41.3 L1713.2,46.2 V61 H1697.8 L1693.4,54.4 H1703.2 Q1707.5,54.4 1707.5,50 Z" fill="#e8000b"/>
<g transform="translate(1735,39.2)"><use href="#atenea" stroke="#e31b23" stroke-width="1.7"/><use href="#peru" stroke="#111" stroke-width="1.9"/></g>

<!-- status logo -->
<g transform="translate(1666,1019.4) scale(0.52)" fill="#fff"><use href="#crescent"/></g>
<g transform="translate(1666,1019.4) scale(0.52)" fill="#fff">
 <circle cx="-18.5" cy="-18.3" r="2.6"/><circle cx="-13.7" cy="-13.5" r="3.2"/><circle cx="-6.4" cy="-6.4" r="3.9"/>
 <path d="M3.7,-9.5 L9.4,-4.6 V10.2 H-6 L-10.4,3.6 H-0.6 Q3.7,3.6 3.7,-0.8 Z"/>
</g>
<g transform="translate(1680.4,1016.2) scale(0.684,0.65)"><use href="#atenea" stroke="#fff" stroke-width="2.8"/><use href="#peru" stroke="#fff" stroke-width="2.8"/></g>

<!-- tree expanders -->
<g id="expanders"><rect x="13.5" y="167.5" width="8" height="8" fill="#f4f4f4" stroke="#9a9a9a"/><path d="M15.5,171.5 H19.5 M17.5,169.5 V173.5" stroke="#000" stroke-width="1.2"/><rect x="22" y="171.0" width="1" height="1" fill="#222"/><rect x="24" y="171.0" width="1" height="1" fill="#222"/><rect x="26" y="171.0" width="1" height="1" fill="#222"/><rect x="13.5" y="186.5" width="8" height="8" fill="#f4f4f4" stroke="#9a9a9a"/><path d="M15.5,190.5 H19.5 M17.5,188.5 V192.5" stroke="#000" stroke-width="1.2"/><rect x="22" y="190.0" width="1" height="1" fill="#222"/><rect x="24" y="190.0" width="1" height="1" fill="#222"/><rect x="26" y="190.0" width="1" height="1" fill="#222"/><rect x="13.5" y="205.5" width="8" height="8" fill="#f4f4f4" stroke="#9a9a9a"/><path d="M15.5,209.5 H19.5 M17.5,207.5 V211.5" stroke="#000" stroke-width="1.2"/><rect x="22" y="209.0" width="1" height="1" fill="#222"/><rect x="24" y="209.0" width="1" height="1" fill="#222"/><rect x="26" y="209.0" width="1" height="1" fill="#222"/><rect x="13.5" y="223.5" width="8" height="8" fill="#f4f4f4" stroke="#9a9a9a"/><path d="M15.5,227.5 H19.5 M17.5,225.5 V229.5" stroke="#000" stroke-width="1.2"/><rect x="22" y="227.0" width="1" height="1" fill="#222"/><rect x="24" y="227.0" width="1" height="1" fill="#222"/><rect x="26" y="227.0" width="1" height="1" fill="#222"/><rect x="13.5" y="241.5" width="8" height="8" fill="#f4f4f4" stroke="#9a9a9a"/><path d="M15.5,245.5 H19.5 M17.5,243.5 V247.5" stroke="#000" stroke-width="1.2"/><rect x="22" y="245.0" width="1" height="1" fill="#222"/><rect x="24" y="245.0" width="1" height="1" fill="#222"/><rect x="26" y="245.0" width="1" height="1" fill="#222"/><rect x="13.5" y="260.5" width="8" height="8" fill="#f4f4f4" stroke="#9a9a9a"/><path d="M15.5,264.5 H19.5 M17.5,262.5 V266.5" stroke="#000" stroke-width="1.2"/><rect x="22" y="264.0" width="1" height="1" fill="#222"/><rect x="24" y="264.0" width="1" height="1" fill="#222"/><rect x="26" y="264.0" width="1" height="1" fill="#222"/></g>

<!-- tree icons -->
<g fill="#0f5a84">
 <!-- gear -->
 <g transform="translate(38,171)">
  <path d="M0,-6 A6,6 0 1 1 0,6 A6,6 0 1 1 0,-6 Z M0,-2.3 A2.3,2.3 0 1 0 0,2.3 A2.3,2.3 0 1 0 0,-2.3 Z" fill-rule="evenodd"/>
  <rect x="-1.7" y="-8" width="3.4" height="4" rx="0.9" transform="rotate(0)"/><rect x="-1.7" y="-8" width="3.4" height="4" rx="0.9" transform="rotate(45)"/><rect x="-1.7" y="-8" width="3.4" height="4" rx="0.9" transform="rotate(90)"/><rect x="-1.7" y="-8" width="3.4" height="4" rx="0.9" transform="rotate(135)"/><rect x="-1.7" y="-8" width="3.4" height="4" rx="0.9" transform="rotate(180)"/><rect x="-1.7" y="-8" width="3.4" height="4" rx="0.9" transform="rotate(225)"/><rect x="-1.7" y="-8" width="3.4" height="4" rx="0.9" transform="rotate(270)"/><rect x="-1.7" y="-8" width="3.4" height="4" rx="0.9" transform="rotate(315)"/>
 </g>
 <!-- person -->
 <path d="M38.2,183 C36,183 35.1,184.6 35.1,186.8 C35.1,189 36.2,191.2 37,191.8 V192.6 C35,193.2 32.5,193.8 32.2,196.4 H44.3 C44,193.8 41.5,193.2 39.5,192.6 V191.8 C40.3,191.2 41.4,189 41.4,186.8 C41.4,184.6 40.5,183 38.2,183 Z"/>
 <!-- receipts -->
 <rect x="30" y="202.2" width="16" height="13.7" rx="0.8"/>
 <!-- bars -->
 <rect x="30.7" y="242.2" width="4.2" height="10.7"/>
 <rect x="35.9" y="246" width="4.1" height="6.9"/>
 <rect x="41.1" y="238.2" width="4.1" height="14.7"/>
 <!-- book -->
 <rect x="32.6" y="257" width="12.3" height="14.9" fill="#6b9bbd"/>
 <rect x="31.6" y="256" width="11.5" height="14.5"/>
</g>
<g stroke="#8fb8d4" stroke-width="1.1" fill="none">
 <path d="M32.8,205.5 H39.2 M32.8,209 H39.2 M32.8,212.4 H39.2"/>
 <path d="M41.2,205.6 L42.2,206.4 L44,204.8 M41.2,209.1 L42.2,209.9 L44,208.3 M41.2,212.5 L42.2,213.3 L44,211.7"/>
</g>
<path d="M33.9,265.8 L36.5,263.2 L38,264.3 L40.6,261.8 M38.8,261.6 H40.8 V263.6" stroke="#dce9f2" stroke-width="1.1" fill="none"/>

<!-- toolbar icons -->
<g stroke="#1b6b97" stroke-width="1.25" fill="none" stroke-linejoin="miter">
 <!-- add -->
 <path d="M246,181.6 H235.6 V159.8 H245.6 L252.4,166.5 V173.5"/>
 <path d="M245.6,160 V166.4 H252.3 Z" fill="#95b7d0" stroke="#1b6b97" stroke-width="1"/>
 <circle cx="251.1" cy="178.1" r="4.4" fill="#fff"/>
 <path d="M248.6,178.1 H253.6 M251.1,175.6 V180.6" stroke-width="1.2"/>
 <!-- edit -->
 <path d="M329,181.6 H321.6 V159.8 H331.6 L338.4,166.5 V171"/>
 <path d="M331.6,160 V166.4 H338.3 Z" fill="#95b7d0" stroke-width="1"/>
 <path d="M331.8,182 L333,178.3 L340.6,170.8 Q341.8,169.8 342.9,170.9 Q343.9,172 342.9,173.1 L335.3,180.6 Z" fill="#fff" stroke-width="1.3"/>
 <path d="M331.8,182 L333.3,178.5 L335.2,180.5 Z" fill="#1b6b97" stroke="none"/>
 <!-- delete -->
 <path d="M418.7,181.6 H408.5 V159.8 H418 L424.8,166.5 V173.2"/>
 <path d="M418,160 V166.4 H424.7 Z" fill="#95b7d0" stroke-width="1"/>
 <path d="M420.6,173.8 L429.8,182.6 M429.8,173.8 L420.6,182.6"/>
 <!-- refresh -->
 <path d="M507.8,161.3 H502.2 Q498.8,161.3 498.8,164.8 V177.2"/>
 <path d="M495.4,173.9 L498.8,177.5 L502.1,173.9"/>
 <path d="M502.2,180.3 H507.8 Q511.3,180.3 511.3,176.8 V164.6"/>
 <path d="M508,167.9 L511.3,164.4 L514.7,167.9"/>
 <!-- cta ce -->
 <path d="M583.8,181 V160.6 H600.4 V181"/>
 <path d="M581.8,181.3 H602.2" stroke-width="1.8"/>
 <path d="M585.8,164.7 H593.6 M585.8,167.6 H591.9 M585.8,170.6 H593.6 M585.8,173.5 H591.9 M596,164.7 H598 M596,167.6 H598 M596,170.6 H598 M596,173.5 H598 M594.6,178.6 H598" stroke-width="1.2"/>
 <path d="M585.8,176.4 H598" stroke-width="1" stroke="#8db0c8" stroke-dasharray="2,1"/>
 <!-- print -->
 <path d="M671.8,166.2 V159.6 H686.4 V166.2"/>
 <path d="M671.4,178.4 H669.5 Q667.6,178.4 667.6,176.5 V168.2 Q667.6,166.3 669.5,166.3 H688.6 Q690.5,166.3 690.5,168.2 V176.5 Q690.5,178.4 688.6,178.4 H686.6"/>
 <rect x="671.4" y="172.6" width="15.2" height="9.8" rx="1"/>
 <path d="M674.2,175.6 H684 M674.2,177.6 H684 M674.2,179.6 H682" stroke-width="1"/>
 <circle cx="687.5" cy="169.2" r="0.7" fill="#1b6b97" stroke="none"/>
 <!-- excel -->
 <path d="M768,159.6 L754.6,161.8 V179.8 L768,182.3 Z"/>
 <path d="M768,162.5 H777.2 V179.4 H768"/>
 <path d="M768.6,165.3 H770.8 M771.8,165.3 H775.4 M768.6,168.8 H770.8 M771.8,168.8 H775.4 M768.6,172.4 H770.8 M771.8,172.4 H775.4 M768.6,176.1 H770.8 M771.8,176.1 H775.4" stroke-width="1.3"/>
</g>
<path d="M757.4,166 L760.1,170.7 L757.3,175.6 H759.3 L761.1,172.3 L762.9,175.6 H764.9 L762.1,170.7 L764.8,166 H762.8 L761.1,169.1 L759.4,166 Z" fill="#1b6b97"/>

<!-- left logo drop -->
<path d="M21.3,109.5 C18.5,117 7.2,130 7.2,142.5 C7.2,150.5 13.5,156 21.3,156 C29.1,156 35.4,150.5 35.4,142.5 C35.4,130 24.1,117 21.3,109.5 Z" fill="url(#dropg)"/>
<path d="M21.3,113 C19.5,119.5 10.5,131 10.5,142 C10.5,147 13,151 17,153" stroke="#5fe8ff" stroke-width="1" fill="none" opacity="0.8"/>
<path d="M24.5,122 C28,128 31.5,135 31.5,141.5 C31.5,146 30,148.5 28.5,150" stroke="#60f0ff" stroke-width="1.2" fill="none" opacity="0.9"/>

<!-- X5 badge -->
<circle cx="194" cy="130.5" r="15.8" fill="#1a9ad6"/>
<circle cx="193.2" cy="130.3" r="15.2" fill="#263038"/>

<!-- funnel -->
<path d="M233.3,339.8 H240 L237.6,343.3 V347.8 H235.7 V343.3 Z M233.6,341.3 H239.7" stroke="#4a6ea6" stroke-width="1" fill="#fff"/>
<!-- titlebar controls -->
<rect x="1868" y="11" width="7" height="2" fill="#2c4f8c"/>
<path d="M1888.5,7.5 H1894.5 V12.5 H1893" stroke="#2c4f8c" stroke-width="1" fill="none"/>
<rect x="1888.2" y="7" width="6.6" height="1.6" fill="#2c4f8c"/>
<rect x="1886.5" y="9.5" width="6" height="4.5" stroke="#2c4f8c" stroke-width="1" fill="#dbe6f5"/>
<rect x="1886" y="9" width="7" height="1.6" fill="#2c4f8c"/>
<path d="M1907.3,8.3 L1913.7,13.7 M1913.7,8.3 L1907.3,13.7" stroke="#2c4f8c" stroke-width="1.8"/>
<!-- app icon -->
<linearGradient id="appg" x1="0" y1="0" x2="1" y2="0"><stop offset="0" stop-color="#12c8f6"/><stop offset="0.45" stop-color="#1496e0"/><stop offset="1" stop-color="#0f4fc0"/></linearGradient>
<path d="M2,4.5 Q2,2.8 3.7,2.8 H16.3 Q18,2.8 18,4.5 V15.5 H2 Z" fill="url(#appg)"/>
<rect x="2" y="15.5" width="16" height="2" fill="#b8e4f8"/>
<rect x="2" y="17.8" width="16" height="1.3" fill="url(#appg)"/>
<path d="M9,5 L8,9 L11,13" stroke="#2a50c0" stroke-width="1" fill="none" opacity="0.7"/>
<circle cx="7.5" cy="12.5" r="2" fill="#20f0ff" opacity="0.6"/>
<!-- status user icon -->
<path d="M9.5,1014.4 C7.2,1014.4 6.1,1016.3 6.1,1018.6 C6.1,1020.5 7,1022.2 7.9,1023 V1024.2 C6,1024.8 3.6,1025.4 3.4,1027.7 H15.6 C15.4,1025.4 13,1024.8 11.1,1024.2 V1023 C12,1022.2 12.9,1020.5 12.9,1018.6 C12.9,1016.3 11.8,1014.4 9.5,1014.4 Z" fill="none" stroke="#e8e8e8" stroke-width="0.9"/>
<!-- bottom strip -->
<rect x="0" y="1040" width="48" height="1" fill="#4b4b4b"/>
<rect x="48" y="1040" width="288" height="1" fill="#d9d9d9"/>
<rect x="336" y="1040" width="1584" height="1" fill="#2e2a2a"/>
</svg>

<div id="agua" class="a" style="left:38px;top:120px;font-size:21px;font-weight:bold;color:#0d5b88;white-space:nowrap">Agua Potable</div>
<div id="sistema" class="a" style="left:68px;top:142px;font-size:8.5px;font-weight:bold;color:#2592b8;white-space:nowrap">Sistema de Agua Potable</div>
<svg class="a" style="left:0;top:0" width="220" height="160"><path d="M173.8,119.4 H181.2 L187,126.8 L192.8,119.4 H200.6 L190.9,130.5 L200.6,141.6 H192.8 L187,134.2 L181.2,141.6 H173.8 L183.1,130.5 Z" fill="#1a9ad6"/></svg>
<div id="x5f" class="a" style="left:196.5px;top:112px;font-size:31.5px;font-weight:bold;color:#fff;white-space:nowrap;transform:scaleX(0.72);transform-origin:left">5</div>
<div id="tsc1" class="a" style="left:1757px;top:57px;font-size:10.5px;font-weight:bold;color:#6e6e6e;white-space:nowrap;transform:scaleX(0.8);transform-origin:0 0;letter-spacing:2.14px">The Service Company</div>
<div id="tsc2" class="a" style="left:1691px;top:1027px;font-size:8px;font-weight:bold;color:#fff;white-space:nowrap;transform:scaleX(0.8);transform-origin:0 0;letter-spacing:1.45px">The Service Company</div>
<div id="wm1" class="a">Activar Windows</div>
<div id="wm2" class="a">Ve a Configuración para activar Windows.</div>

<div id="st1" class="a stt" style="left:20px">User</div><div id="st2" class="a stt" style="left:50px">USUARIO : ADMINISTRATOR</div>
<div id="st3" class="a stt" style="left:1807px;font-size:12px;top:1014px">Version :19.0.726.3</div>

</body></html>
